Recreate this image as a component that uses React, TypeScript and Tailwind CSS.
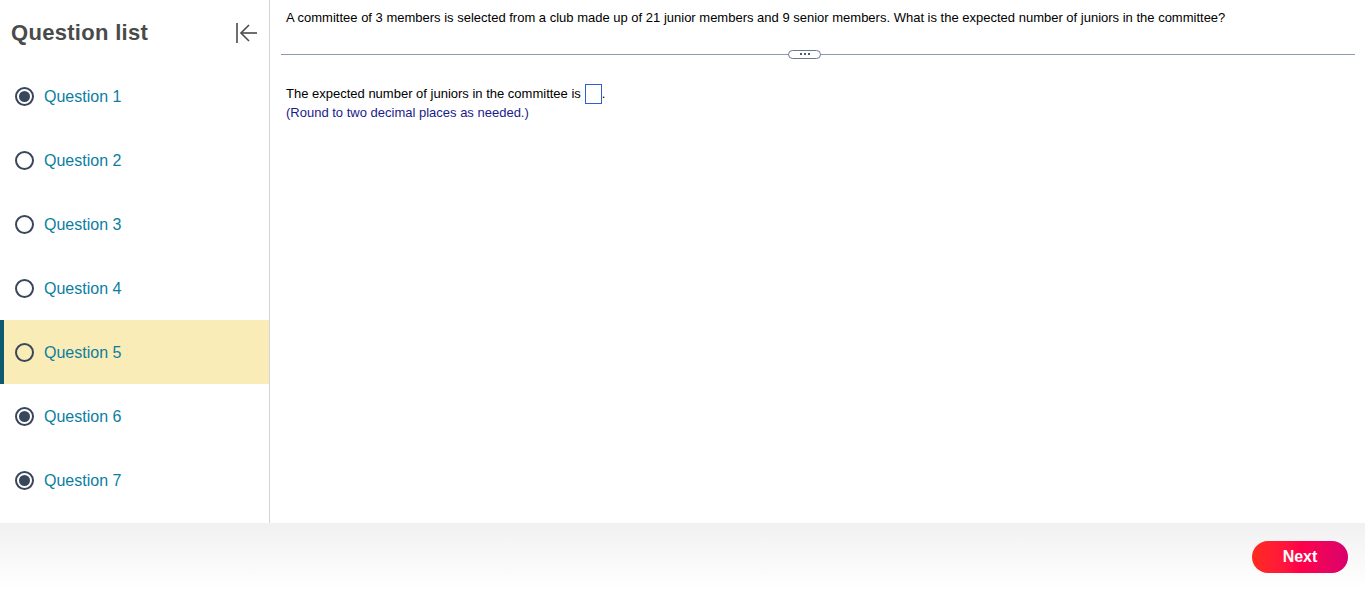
import { useState } from "react";

type Q = { id: number; done: boolean };

const questions: Q[] = [
  { id: 1, done: true },
  { id: 2, done: false },
  { id: 3, done: false },
  { id: 4, done: false },
  { id: 5, done: false },
  { id: 6, done: true },
  { id: 7, done: true },
];

function Radio({ done }: { done: boolean }) {
  return (
    <span className="flex h-[19px] w-[19px] items-center justify-center rounded-full border-2 border-[#39475a]">
      {done && <span className="h-[11px] w-[11px] rounded-full bg-[#39475a]" />}
    </span>
  );
}

export default function App() {
  const [current, setCurrent] = useState(5);

  return (
    <div className="flex h-[589px] w-full flex-col overflow-hidden bg-white font-['Liberation_Sans',Arial,sans-serif]">
      <div className="flex min-h-0 flex-1">
        <aside className="flex w-[270px] shrink-0 flex-col border-r border-[#d4d4d8]">
          <div className="flex h-[64px] items-center justify-between pl-[11px] pr-[10px]">
            <h1 className="text-[22px] font-bold tracking-[0.3px] text-[#4a4a4a]">Question list</h1>
            <svg width="24" height="22" viewBox="0 0 24 22" fill="none" stroke="#4a4a4a" strokeWidth="1.6" className="mt-[1px]">
              <path d="M2 1v20" />
              <path d="M22 11H7" />
              <path d="M14 3l-8 8 8 8" />
            </svg>
          </div>
          {questions.map((q) => {
            const active = q.id === current;
            return (
              <button
                key={q.id}
                onClick={() => setCurrent(q.id)}
                className={`flex h-[64px] items-center gap-[10px] pt-[1px] text-left ${
                  active ? "border-l-4 border-[#0e5a6e] bg-[#faecb7] pl-[11px]" : "pl-[15px]"
                }`}
              >
                <Radio done={q.done} />
                <span className="text-[16px] text-[#0b7ea0]">Question {q.id}</span>
              </button>
            );
          })}
        </aside>

        <main className="flex-1 pl-[11px] pr-[10px] pt-[8px]">
          <p className="pl-[5px] text-[13px] text-black">
            A committee of 3 members is selected from a club made up of 21 junior members and 9 senior members. What is
            the expected number of juniors in the committee?
          </p>
          <div className="relative mt-[26px] h-px bg-[#8a9ab0]">
            <span className="absolute left-[507px] top-[-4px] flex h-[9px] w-[33px] items-center justify-center gap-[2px] rounded-full border border-[#6b7a8f] bg-white">
              <span className="h-[2px] w-[2px] bg-[#4b5a70]" />
              <span className="h-[2px] w-[2px] bg-[#4b5a70]" />
              <span className="h-[2px] w-[2px] bg-[#4b5a70]" />
            </span>
          </div>
          <div className="mt-[29px] pl-[5px] text-[13px]">
            <p className="flex items-center text-black">
              The expected number of juniors in the committee is
              <span className="ml-[4px] inline-block h-[20px] w-[17px] border border-[#2f5fd0]" />
              <span>.</span>
            </p>
            <p className="mt-[-1px] text-[#1a1a8c]">(Round to two decimal places as needed.)</p>
          </div>
        </main>
      </div>

      <footer className="flex h-[66px] shrink-0 items-center justify-end bg-gradient-to-b from-[#f1f1f1] to-white pr-[17px]">
        <button className="mt-[1px] h-[32px] w-[96px] rounded-full bg-gradient-to-r from-[#ff2a1a] via-[#ff0048] to-[#d9006c] text-[16px] font-bold text-white">
          Next
        </button>
      </footer>
    </div>
  );
}
